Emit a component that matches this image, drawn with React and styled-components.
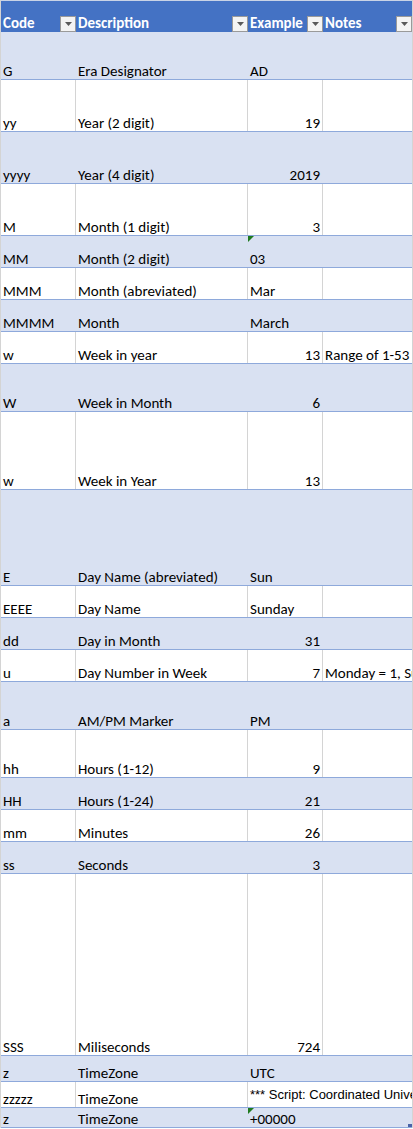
import React from 'react';
import styled, { createGlobalStyle } from 'styled-components';

const GlobalStyle = createGlobalStyle`
  html, body { margin: 0; padding: 0; background: #ffffff; }
  body {
    font-family: Carlito, Calibri, Lato, "Liberation Sans", sans-serif;
    overflow: hidden;
  }
`;

const COLS = '75px 172px 75px 89px';
const BAND = '#D9E1F2';
const GRID = '#D4D4D4';
const RULE = '#8EA9DB';

const Sheet = styled.div`
  width: 413px;
  box-sizing: border-box;
  border-left: 1px solid ${GRID};
  border-right: 1px solid ${GRID};
  overflow: hidden;
  position: relative;
`;

const HeaderRow = styled.div`
  display: grid;
  grid-template-columns: ${COLS};
  height: 32px;
  box-sizing: border-box;
  border-top: 1px solid #c9d3e6;
  background: #4472C4;
`;

const HeaderCell = styled.div`
  display: flex;
  align-items: flex-end;
  justify-content: space-between;
  padding-left: 2px;
  min-width: 0;
`;

const HeaderLabel = styled.span`
  color: #ffffff;
  font-weight: 700;
  font-size: 15px;
  line-height: 16px;
  padding-bottom: 1px;
  white-space: nowrap;
`;

const FilterButton = styled.span`
  flex: none;
  width: 16px;
  height: 16px;
  box-sizing: border-box;
  margin-bottom: 0;
  border: 1px solid #9a9a9a;
  background: #f4f4f4;
  display: flex;
  align-items: center;
  justify-content: center;
`;

const Row = styled.div`
  display: grid;
  grid-template-columns: ${COLS};
  height: ${p => p.$h}px;
  box-sizing: border-box;
  border-bottom: 1px solid ${RULE};
  background: ${p => (p.$band ? BAND : '#ffffff')};
`;

const Cell = styled.div`
  position: relative;
  display: flex;
  align-items: flex-end;
  justify-content: ${p => (p.$right ? 'flex-end' : 'flex-start')};
  box-sizing: border-box;
  padding: 0 2px 0 2px;
  border-right: 1px solid ${p => (p.$band || p.$spill ? 'transparent' : GRID)};
  font-size: 15px;
  line-height: 16px;
  color: #000000;
  white-space: nowrap;
  min-width: 0;
  z-index: ${p => (p.$spill ? 1 : 0)};
`;

const LastCell = styled(Cell)`
  border-right: none;
`;

const ArialText = styled.span`
  font-family: "Liberation Sans", Arial, sans-serif;
  font-size: 13px;
  line-height: 15px;
  padding-bottom: 5px;
`;

const ErrorFlag = styled.span`
  position: absolute;
  top: 0;
  left: 0;
  width: 0;
  height: 0;
  border-top: 6px solid #1f7a1f;
  border-right: 6px solid transparent;
`;

const Handle = styled.span`
  position: absolute;
  right: 0;
  bottom: 0;
  width: 4px;
  height: 3px;
  background: #4a63a8;
`;

const rows = [
  ['G', 'Era Designator', 'AD', false, '', 48],
  ['yy', 'Year (2 digit)', '19', true, '', 52],
  ['yyyy', 'Year (4 digit)', '2019', true, '', 52],
  ['M', 'Month (1 digit)', '3', true, '', 52],
  ['MM', 'Month (2 digit)', '03', false, '', 32, 'flag'],
  ['MMM', 'Month (abreviated)', 'Mar', false, '', 32],
  ['MMMM', 'Month', 'March', false, '', 32],
  ['w', 'Week in year', '13', true, 'Range of 1-53', 32],
  ['W', 'Week in Month', '6', true, '', 48],
  ['w', 'Week in Year', '13', true, '', 78],
  ['E', 'Day Name (abreviated)', 'Sun', false, '', 96],
  ['EEEE', 'Day Name', 'Sunday', false, '', 32],
  ['dd', 'Day in Month', '31', true, '', 32],
  ['u', 'Day Number in Week', '7', true, 'Monday = 1, Sunday = 7', 32],
  ['a', 'AM/PM Marker', 'PM', false, '', 48],
  ['hh', 'Hours (1-12)', '9', true, '', 48],
  ['HH', 'Hours (1-24)', '21', true, '', 32],
  ['mm', 'Minutes', '26', true, '', 32],
  ['ss', 'Seconds', '3', true, '', 32],
  ['SSS', 'Miliseconds', '724', true, '', 182],
  ['z', 'TimeZone', 'UTC', false, '', 26],
  ['zzzzz', 'TimeZone', '*** Script: Coordinated Universal Time', false, '', 26, 'arial'],
  ['z', 'TimeZone', '+00000', false, '', 20, 'flag'],
];

const Arrow = () => (
  <svg width="7" height="4" viewBox="0 0 7 4">
    <path d="M0 0 H7 L3.5 4 Z" fill="#5a5a5a" />
  </svg>
);

const headers = ['Code', 'Description', 'Example', 'Notes'];

export default function App() {
  return (
    <>
      <GlobalStyle />
      <Sheet>
        <HeaderRow>
          {headers.map(h => (
            <HeaderCell key={h}>
              <HeaderLabel>{h}</HeaderLabel>
              <FilterButton><Arrow /></FilterButton>
            </HeaderCell>
          ))}
        </HeaderRow>
        {rows.map(([code, desc, ex, right, notes, h, kind], i) => {
          const band = i % 2 === 0;
          const spill = kind === 'arial';
          const last = i === rows.length - 1;
          return (
            <Row key={i} $h={h} $band={band}>
              <Cell $band={band}>{code}</Cell>
              <Cell $band={band}>{desc}</Cell>
              <Cell $band={band} $right={right} $spill={spill}>
                {kind === 'flag' && <ErrorFlag />}
                {spill ? <ArialText>{ex}</ArialText> : ex}
              </Cell>
              <LastCell $band={band}>
                {notes}
                {last && <Handle />}
              </LastCell>
            </Row>
          );
        })}
      </Sheet>
    </>
  );
}
